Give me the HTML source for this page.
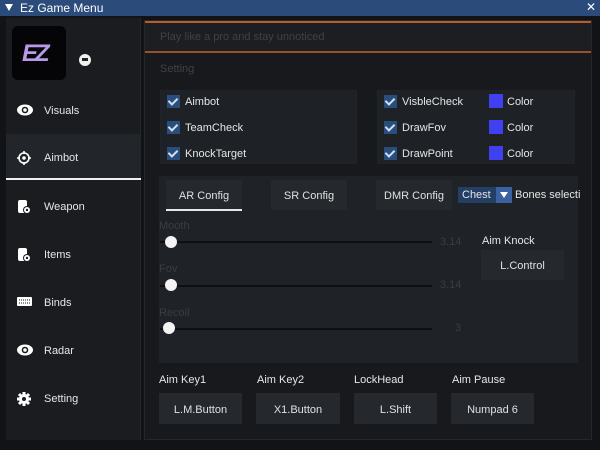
<!DOCTYPE html>
<html><head><style>
*{margin:0;padding:0;box-sizing:border-box}
body{width:600px;height:450px;background:#111316;font-family:"Liberation Sans","DejaVu Sans",sans-serif;font-size:11px;color:#e6e6e6;position:relative;overflow:hidden}
.a{position:absolute}
.title{left:0;top:0;width:600px;height:16px;background:#2b4c7a;color:#fff;font-size:12px}
.side{left:6px;top:18px;width:135px;height:422px;background:#1a1c20;border-right:1px solid #222529}
.mi{left:0;width:135px;height:46px;}
.mi span{position:absolute;left:38px;top:18px;font-size:11px}
.mi svg{position:absolute;left:11px;top:17px}
.main{left:144px;top:20px;width:448px;height:420px;background:#17191c;border:1px solid #24272b}
.box{background:#1e2125;border:1px solid #202327}
.cb{width:13px;height:13px;background:#294e7c}
.cb:after{content:"";position:absolute;left:3px;top:1px;width:4px;height:7px;border:solid #cfe0f5;border-width:0 2px 2px 0;transform:rotate(45deg)}
.btn{background:#25282d;text-align:center;color:#e0e0e0}
.sw{width:14px;height:14px;background:#4040f0}
.faint{color:#3a3d42}
.track{height:2px;background:#0e0f11}
.knob{width:12px;height:12px;border-radius:50%;background:#f4f4f4}
</style></head><body>
<div class="a title">
<div class="a" style="left:5px;top:4px;width:0;height:0;border-left:4px solid transparent;border-right:4px solid transparent;border-top:7px solid #fff"></div>
<div class="a" style="left:20px;top:1px">Ez Game Menu</div>
<div class="a" style="left:586px;top:0px;font-size:12px">✕</div>
</div>
<div class="a side">
<div class="a" style="left:6px;top:8px;width:54px;height:54px;background:#050507;border-radius:6px">
<div class="a" style="left:10px;top:14px;font:bold italic 24px 'Liberation Sans';color:#b89ae8;letter-spacing:-3px">EZ</div></div>
<div class="a" style="left:73px;top:36px;width:12px;height:12px;border-radius:50%;background:#f0f0f0"><div class="a" style="left:3px;top:4px;width:6px;height:3px;background:#222"></div></div>
<div class="a mi" style="top:69px"><svg width="16" height="12" viewBox="0 0 16 12"><ellipse cx="8" cy="6" rx="8" ry="5.5" fill="#fff"/><circle cx="8" cy="6" r="3.3" fill="#1a1c20"/><circle cx="8" cy="6" r="1.8" fill="#fff"/></svg><span>Visuals</span></div>
<div class="a mi" style="top:116px;background:#222529"><svg width="14" height="14" viewBox="0 0 14 14"><circle cx="7" cy="7" r="5" fill="none" stroke="#fff" stroke-width="1.6"/><circle cx="7" cy="7" r="1.8" fill="#fff"/><path d="M7 0v3M7 11v3M0 7h3M11 7h3" stroke="#fff" stroke-width="1.6"/></svg><span>Aimbot</span>
<div class="a" style="left:0;top:44px;width:135px;height:2px;background:#f0f0f0"></div></div>
<div class="a mi" style="top:165px"><svg width="14" height="14" viewBox="0 0 14 14"><rect x="1" y="0" width="9" height="13" rx="2" fill="#fff"/><circle cx="10" cy="10" r="4" fill="#1a1c20"/><circle cx="10" cy="10" r="3" fill="#fff"/><circle cx="10" cy="10" r="1.2" fill="#1a1c20"/></svg><span>Weapon</span></div>
<div class="a mi" style="top:213px"><svg width="14" height="14" viewBox="0 0 14 14"><rect x="1" y="0" width="9" height="13" rx="2" fill="#fff"/><circle cx="10" cy="10" r="4" fill="#1a1c20"/><circle cx="10" cy="10" r="3" fill="#fff"/><circle cx="10" cy="10" r="1.2" fill="#1a1c20"/></svg><span>Items</span></div>
<div class="a mi" style="top:261px"><svg width="15" height="11" viewBox="0 0 15 11"><rect x="0" y="1" width="15" height="9" rx="1" fill="#fff"/><path d="M2 4h11M2 7h11" stroke="#1a1c20" stroke-width="1" stroke-dasharray="1 1"/></svg><span>Binds</span></div>
<div class="a mi" style="top:309px"><svg width="16" height="12" viewBox="0 0 16 12"><ellipse cx="8" cy="6" rx="8" ry="5.5" fill="#fff"/><circle cx="8" cy="6" r="3.3" fill="#1a1c20"/><circle cx="8" cy="6" r="1.8" fill="#fff"/></svg><span>Radar</span></div>
<div class="a mi" style="top:357px"><svg width="14" height="14" viewBox="0 0 14 14"><circle cx="7" cy="7" r="5" fill="#fff"/><path d="M7 0v14M0 7h14M2 2l10 10M12 2L2 12" stroke="#fff" stroke-width="3"/><circle cx="7" cy="7" r="2" fill="#1a1c20"/></svg><span>Setting</span></div>
</div>
<div class="a main">
<div class="a" style="left:0;top:0;width:446px;height:32px;background:#1c1e21;border-top:2px solid #b85c28;border-bottom:2px solid #9a5028"></div>
<div class="a" style="left:15px;top:10px;color:#3e4146;font-size:11px">Play like a pro and stay unnoticed</div>
<div class="a" style="left:15px;top:42px;color:#3e4146">Setting</div>
</div>
<div class="a box" style="left:160px;top:90px;width:197px;height:74px"></div>
<div class="a box" style="left:377px;top:90px;width:198px;height:74px"></div>
<div class="a cb" style="left:167px;top:95px"></div><div class="a" style="left:185px;top:96px">Aimbot</div>
<div class="a cb" style="left:167px;top:121px"></div><div class="a" style="left:185px;top:122px">TeamCheck</div>
<div class="a cb" style="left:167px;top:147px"></div><div class="a" style="left:185px;top:148px">KnockTarget</div>
<div class="a cb" style="left:384px;top:95px"></div><div class="a" style="left:402px;top:96px">VisbleCheck</div>
<div class="a cb" style="left:384px;top:121px"></div><div class="a" style="left:402px;top:122px">DrawFov</div>
<div class="a cb" style="left:384px;top:147px"></div><div class="a" style="left:402px;top:148px">DrawPoint</div>
<div class="a sw" style="left:489px;top:94px"></div><div class="a" style="left:507px;top:96px">Color</div>
<div class="a sw" style="left:489px;top:120px"></div><div class="a" style="left:507px;top:122px">Color</div>
<div class="a sw" style="left:489px;top:146px"></div><div class="a" style="left:507px;top:148px">Color</div>
<div class="a" style="left:159px;top:176px;width:419px;height:187px;background:#1f2226"></div>
<div class="a btn" style="left:166px;top:180px;width:76px;height:30px;line-height:32px">AR Config</div>
<div class="a" style="left:166px;top:209px;width:76px;height:2px;background:#e8e8e8"></div>
<div class="a btn" style="left:271px;top:180px;width:76px;height:30px;line-height:32px">SR Config</div>
<div class="a btn" style="left:376px;top:180px;width:76px;height:30px;line-height:32px">DMR Config</div>
<div class="a" style="left:458px;top:187px;width:54px;height:16px;background:#243f66;padding-left:4px;line-height:16px">Chest</div>
<div class="a" style="left:496px;top:187px;width:16px;height:16px;background:#3a62a0"><div class="a" style="left:4px;top:5px;border-left:4px solid transparent;border-right:4px solid transparent;border-top:6px solid #fff"></div></div>
<div class="a" style="left:515px;top:189px">Bones selecti</div>
<div class="a faint" style="left:159px;top:220px">Mooth</div>
<div class="a track" style="left:160px;top:241px;width:272px"></div>
<div class="a knob" style="left:165px;top:236px"></div>
<div class="a faint" style="left:440px;top:236px">3.14</div>
<div class="a faint" style="left:159px;top:263px">Fov</div>
<div class="a track" style="left:160px;top:285px;width:272px"></div>
<div class="a knob" style="left:165px;top:279px"></div>
<div class="a faint" style="left:440px;top:279px">3.14</div>
<div class="a faint" style="left:159px;top:307px">Recoil</div>
<div class="a track" style="left:160px;top:328px;width:272px"></div>
<div class="a knob" style="left:163px;top:322px"></div>
<div class="a faint" style="left:455px;top:322px">3</div>
<div class="a" style="left:482px;top:235px">Aim Knock</div>
<div class="a btn" style="left:481px;top:250px;width:83px;height:30px;line-height:33px">L.Control</div>
<div class="a" style="left:159px;top:374px">Aim Key1</div>
<div class="a" style="left:257px;top:374px">Aim Key2</div>
<div class="a" style="left:354px;top:374px">LockHead</div>
<div class="a" style="left:452px;top:374px">Aim Pause</div>
<div class="a btn" style="left:159px;top:393px;width:83px;height:31px;line-height:35px">L.M.Button</div>
<div class="a btn" style="left:256px;top:393px;width:84px;height:31px;line-height:35px">X1.Button</div>
<div class="a btn" style="left:354px;top:393px;width:83px;height:31px;line-height:35px">L.Shift</div>
<div class="a btn" style="left:451px;top:393px;width:83px;height:31px;line-height:35px">Numpad 6</div>
</body></html>
